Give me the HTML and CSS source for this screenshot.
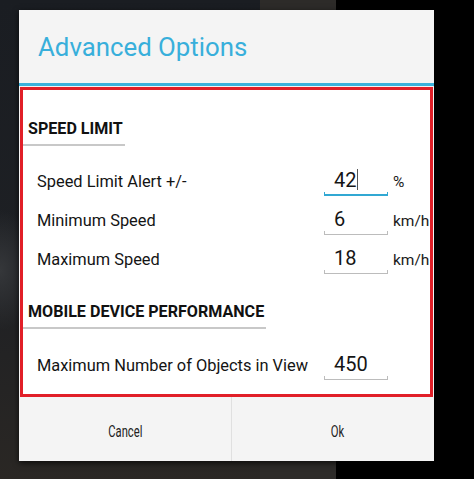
FILE: index.html
```html
<!DOCTYPE html>
<html>
<head>
<meta charset="utf-8">
<title>Advanced Options</title>
<link rel="stylesheet" href="styles.css">
</head>
<body>
<div class="screen">
  <div class="dialog">
    <div class="title">Advanced Options</div>
    <div class="content">
      <div class="section-head first"><span>SPEED LIMIT</span></div>
      <div class="row first">
        <div class="label">Speed Limit Alert +/-</div>
        <div class="field focused"><div class="value">42<span class="cursor"></span></div><div class="line"></div></div>
        <div class="unit">%</div>
      </div>
      <div class="row">
        <div class="label">Minimum Speed</div>
        <div class="field"><div class="value">6</div><div class="line"></div></div>
        <div class="unit">km/h</div>
      </div>
      <div class="row">
        <div class="label">Maximum Speed</div>
        <div class="field"><div class="value">18</div><div class="line"></div></div>
        <div class="unit">km/h</div>
      </div>
      <div class="section-head second"><span>MOBILE DEVICE PERFORMANCE</span></div>
      <div class="row last">
        <div class="label">Maximum Number of Objects in View</div>
        <div class="field"><div class="value">450</div><div class="line"></div></div>
      </div>
    </div>
    <div class="buttons">
      <div class="btn cancel"><span>Cancel</span></div>
      <div class="btn ok"><span>Ok</span></div>
    </div>
  </div>
</div>
</body>
</html>
```

FILE: styles.css
```css
html, body {
  margin: 0;
  padding: 0;
}

body {
  width: 474px;
  height: 479px;
  overflow: hidden;
  font-family: Roboto, "Noto Sans", "Liberation Sans", sans-serif;
}

.screen {
  box-sizing: border-box;
  width: 474px;
  height: 479px;
  padding: 10px 0 0 19px;
  background:
    linear-gradient(to right, rgba(0,0,0,0) 0, rgba(0,0,0,0) 336px, #000 336px),
    linear-gradient(to right, rgba(0,0,0,0) 0, rgba(0,0,0,0) 260px, #2d2b29 260px, #2d2b29 336px, rgba(0,0,0,0) 336px),
    radial-gradient(ellipse 40px 60px at 0 270px, #35373a, rgba(53,55,58,0)),
    linear-gradient(to bottom, #1a1d22 0, #1e2024 55%, #2a2724 100%);
}

.dialog {
  width: 415px;
  background: #f4f4f4;
  box-shadow: 0 2px 6px rgba(0, 0, 0, 0.7);
}

.title {
  box-sizing: border-box;
  height: 76px;
  padding: 21px 0 0 19px;
  font-size: 25.8px;
  line-height: 32px;
  color: #38afdb;
  background: #f4f4f4;
  border-bottom: 3px solid #3ab2dc;
}

.content {
  box-sizing: border-box;
  height: 310px;
  margin: 1px 1px 0;
  padding-top: 29px;
  border: 3px solid #e11f28;
  background: #fff;
  overflow: hidden;
}

.section-head span {
  display: inline-block;
  padding: 0 2px 5px 5px;
  border-bottom: 2px solid #c8c8c8;
  font-size: 16.1px;
  font-weight: bold;
  line-height: 20px;
  color: #111;
  white-space: nowrap;
}

.section-head.second {
  margin-top: 17px;
}

.row {
  display: flex;
  align-items: baseline;
  height: 39px;
  padding-left: 14px;
}

.row.first {
  margin-top: 22px;
}

.row.last {
  margin-top: 23px;
}

.label {
  flex-shrink: 0;
  width: 287px;
  font-size: 16.4px;
  line-height: 24px;
  color: #141414;
  white-space: nowrap;
}

.field {
  flex-shrink: 0;
  display: flex;
  flex-direction: column;
  width: 64px;
}

.value {
  height: 24px;
  padding-left: 10px;
  font-size: 20px;
  line-height: 24px;
  color: #151515;
}

.cursor {
  display: inline-block;
  width: 1px;
  height: 21px;
  margin-left: 1px;
  vertical-align: -3px;
  background: #555;
}

.line {
  box-sizing: border-box;
  height: 4px;
  border: 1px solid #bcbcbc;
  border-top: none;
}

.focused .line {
  border-color: #31a8d3;
  border-bottom-width: 2px;
}

.unit {
  flex-shrink: 0;
  margin-left: 5px;
  font-size: 15.5px;
  line-height: 24px;
  color: #1a1a1a;
  white-space: nowrap;
}

.buttons {
  display: flex;
  height: 64px;
  background: #f4f4f4;
}

.btn {
  box-sizing: border-box;
  height: 64px;
  padding-top: 5px;
  text-align: center;
  font-size: 16px;
  line-height: 59px;
  color: #222;
}

.btn span {
  display: inline-block;
  transform: scaleX(0.7);
}

.btn.cancel {
  width: 213px;
  border-right: 1px solid #e0e0e0;
}

.btn.ok {
  flex: 1;
  padding-left: 10px;
}
```
